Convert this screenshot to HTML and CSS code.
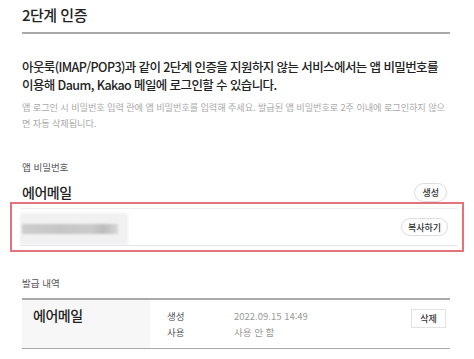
FILE: index.html
```html
<!DOCTYPE html>
<html lang="ko">
<head>
  <meta charset="UTF-8" />
  <title>2단계 인증</title>
  <link rel="stylesheet" href="styles.css">
</head>
<body>

<div class="page">
  <h1 class="title">2단계 인증</h1>

  <div class="intro">
    <p class="lead">아웃룩(IMAP/POP3)과 같이 2단계 인증을 지원하지 않는 서비스에서는 앱 비밀번호를 이용해 Daum, Kakao 메일에 로그인할 수 있습니다.</p>
    <p class="note">앱 로그인 시 비밀번호 입력 란에 앱 비밀번호를 입력해 주세요. 발급된 앱 비밀번호로 2주 이내에 로그인하지 않으면 자동 삭제됩니다.</p>
  </div>

  <!-- 앱 비밀번호 -->
  <section class="app-pw">
    <h2 class="label">앱 비밀번호</h2>
    <div class="pw-head">
      <span class="pw-name">에어메일</span>
      <button class="pill">생성</button>
    </div>
    <div class="highlight">
      <div class="pw-field">
        <span class="pw-blur"><span class="pw-blur-bar"></span></span>
        <button class="pill">복사하기</button>
      </div>
    </div>
  </section>

  <!-- 발급 내역 -->
  <section class="history">
    <h2 class="label">발급 내역</h2>
    <div class="history-row">
      <div class="history-name">에어메일</div>
      <div class="history-info">
        <div class="info-line"><span class="info-key">생성</span><span class="info-val">2022.09.15 14:49</span></div>
        <div class="info-line"><span class="info-key">사용</span><span class="info-val">사용 안 함</span></div>
      </div>
      <div class="history-action">
        <button class="btn-delete">삭제</button>
      </div>
    </div>
  </section>
</div>

</body>
</html>
```

FILE: styles.css
```css
:root {
  --text-color: #222;
  --sub-color: #555;
  --muted-color: #aaa;
  --line-color: #a9a9a9;
  --alert-color: #e3727a;
}

body {
  margin: 0;
  background: #fff;
  color: var(--text-color);
  font-family: "Noto Sans CJK KR", "Noto Sans", sans-serif;
}

.page {
  padding: 0 24px 0 22px;
}

.title {
  margin: 0;
  padding: 5px 0 7px;
  font-size: 15px;
  line-height: 20px;
  font-weight: 500;
  letter-spacing: -0.5px;
  border-bottom: 2px solid var(--line-color);
}

.intro {
  padding-top: 24px;
}

.lead {
  margin: 0;
  font-size: 12.5px;
  line-height: 18px;
  font-weight: 500;
  letter-spacing: -0.6px;
}

.note {
  max-width: 424px;
  margin: 5px 0 0;
  font-size: 9.2px;
  line-height: 16px;
  color: var(--muted-color);
  letter-spacing: -0.1px;
}

.label {
  margin: 0;
  font-size: 9.5px;
  line-height: 14px;
  font-weight: 400;
  color: var(--sub-color);
}

.app-pw {
  padding-top: 29px;
}

.pw-head {
  display: flex;
  align-items: center;
  justify-content: space-between;
  margin-top: 8px;
  height: 20px;
  padding-right: 3px;
}

.pw-name {
  font-size: 14px;
  font-weight: 500;
  letter-spacing: -0.5px;
}

.pill {
  font-family: inherit;
  font-size: 9px;
  font-weight: 500;
  color: #333;
  background: #fff;
  border: 1px solid #ddd;
  border-radius: 10px;
  height: 19px;
  padding: 0 7px;
  cursor: pointer;
}

.highlight {
  margin: 0 -14px 0 -12px;
  padding: 4px 5px 4px 8px;
  border: 2px solid var(--alert-color);
}

.pw-field {
  display: flex;
  align-items: center;
  justify-content: space-between;
  height: 36px;
  padding-right: 9px;
  border-top: 1px solid #eee;
  border-bottom: 1px solid #dfe3ea;
}

.pw-field .pill {
  height: 18px;
  padding: 0 6px;
}

.pw-blur {
  display: flex;
  align-items: center;
  width: 108px;
  height: 32px;
  margin-top: 4px;
  background: #f1f1f1;
  filter: blur(0.8px);
}

.pw-blur-bar {
  width: 96px;
  height: 10px;
  margin-left: 2px;
  background: linear-gradient(90deg, #cdcdcd 0%, #c6c6c6 40%, #cbcbcb 70%, #bdbdbd 85%, #d8d8d8 100%);
}

.history {
  padding-top: 24px;
}

.history-row {
  display: flex;
  margin-top: 8px;
  height: 48px;
  border-top: 2px solid var(--line-color);
  border-bottom: 1px solid var(--line-color);
}

.history-name {
  width: 117px;
  padding: 5px 0 0 11px;
  background: #f7f7f7;
  font-size: 14px;
  font-weight: 500;
  letter-spacing: -0.5px;
}

.history-info {
  flex: 1;
  padding: 8px 0 0 17px;
}

.info-line {
  display: flex;
  font-size: 9.5px;
  line-height: 16px;
}

.info-key {
  width: 67px;
  color: var(--sub-color);
}

.info-val {
  color: #999;
}

.history-action {
  display: flex;
  align-items: flex-start;
  padding: 9px 4px 0 0;
}

.btn-delete {
  font-family: inherit;
  font-size: 9px;
  font-weight: 500;
  color: #333;
  background: #fff;
  border: 1px solid #e2e2e2;
  height: 19px;
  width: 35px;
  padding: 0;
  cursor: pointer;
}
```
